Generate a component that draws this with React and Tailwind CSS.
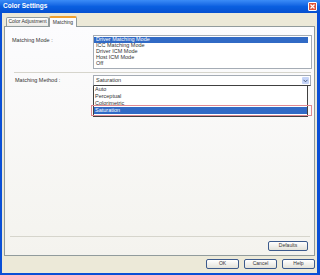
import React from 'react';

const font = { fontFamily: '"Liberation Sans", Arial, sans-serif' };

function XpButton({ label, className = '' }) {
  return (
    <div
      className={`flex h-[10px] items-center justify-center rounded-[2px] border border-[#3c5a8c] bg-gradient-to-b from-[#ffffff] to-[#e3e2da] text-[5px] text-[#333] ${className}`}
    >
      {label}
    </div>
  );
}

function Chevron() {
  return (
    <svg width="5" height="4" viewBox="0 0 5 4">
      <path d="M0.5 0.8 L2.5 2.8 L4.5 0.8" stroke="#4d6185" strokeWidth="1" fill="none" />
    </svg>
  );
}

export default function App() {
  const modes = ['Driver Matching Mode', 'ICC Matching Mode', 'Driver ICM Mode', 'Host ICM Mode', 'Off'];
  const methods = ['Auto', 'Perceptual', 'Colorimetric'];

  return (
    <div className="flex h-[275px] w-[320px] flex-col bg-[#0a4fd6]" style={font}>
      {/* title bar */}
      <div className="flex h-[13px] items-center justify-between bg-gradient-to-b from-[#3b8cf7] via-[#0a5fe0] to-[#0650d0] pl-[3px] pr-[3px]">
        <span className="text-[6.5px] font-bold leading-none text-white">Color Settings</span>
        <div className="flex h-[9px] w-[9px] items-center justify-center rounded-[1px] border border-white bg-[#e0533a]">
          <svg width="5" height="5" viewBox="0 0 5 5">
            <path d="M0.5 0.5 L4.5 4.5 M4.5 0.5 L0.5 4.5" stroke="#fff" strokeWidth="1.2" />
          </svg>
        </div>
      </div>

      {/* body */}
      <div className="ml-[2px] mr-[3px] flex flex-1 flex-col bg-[#ece9d8] px-[2px]">
        {/* tabs */}
        <div className="flex h-[13px] items-end pl-[2px]">
          <div className="flex h-[9px] w-[43px] items-center justify-center rounded-t-[2px] border border-b-0 border-[#919b9c] bg-gradient-to-b from-[#ffffff] to-[#ecebe6] text-[5px] text-[#333]">
            Color Adjustment
          </div>
          <div className="relative -mb-px flex h-[11px] w-[28px] items-center justify-center rounded-t-[2px] border border-b-0 border-t-2 border-[#919b9c] border-t-[#f0a030] bg-[#fcfcfe] text-[5px] text-[#333]">
            Matching
          </div>
        </div>

        {/* panel */}
        <div className="flex h-[230px] flex-col border border-[#919b9c] bg-gradient-to-b from-[#fcfcfe] to-[#f4f3ee] pt-[8px]">
          <div className="flex">
            <div className="w-[88px] pl-[7px] pt-[3px] text-[5.5px] leading-none text-[#333]">Matching Mode :</div>
            <div className="h-[34px] w-[219px] border border-[#a5acb5] bg-white pr-[3px] pt-[1px]">
              {modes.map((m, i) => (
                <div
                  key={m}
                  className={`flex h-[6px] items-center pl-[2px] text-[5.5px] leading-none ${i === 0 ? 'bg-[#316ac5] text-white' : 'text-[#333]'}`}
                >
                  {m}
                </div>
              ))}
            </div>
          </div>

          <div className="ml-[9px] mr-[3px] mt-[3px] border-t border-[#d6d5cc]" />

          <div className="mt-[2px] flex">
            <div className="w-[88px] pl-[10px] pt-[3px] text-[5.5px] leading-none text-[#333]">Matching Method :</div>
            <div className="relative w-[218px]">
              <div className="flex h-[11px] items-center justify-between border border-[#a5acb5] border-b-[#404040] bg-white pl-[2px] pr-[1px] text-[5.5px] text-[#333]">
                <span className="leading-none">Saturation</span>
                <div className="flex h-[7px] w-[7px] items-center justify-center rounded-[1px] bg-[#c6d5f8]">
                  <Chevron />
                </div>
              </div>
              {/* dropdown list */}
              <div className="absolute left-0 top-[11px] w-[215px] border-b border-l border-r border-[#404040] bg-white pb-[2px]">
                {methods.map((m) => (
                  <div key={m} className="flex h-[7px] items-center pl-[1px] text-[5.5px] leading-none text-[#333]">
                    {m}
                  </div>
                ))}
                <div className="flex h-[7px] items-center bg-[#316ac5] pl-[1px] text-[5.5px] leading-none text-white">
                  Saturation
                </div>
              </div>
              {/* highlight frame */}
              <div className="absolute -left-[2px] top-[30px] h-[11px] w-[221px] border border-[#e08a92]" />
            </div>
          </div>

          <div className="flex-1" />

          <div className="ml-[5px] mr-[4px] border-t border-[#d6d5cc]" />
          <div className="flex justify-end pb-[4px] pr-[6px] pt-[4px]">
            <XpButton label="Defaults" className="w-[40px]" />
          </div>
        </div>

        {/* buttons */}
        <div className="flex justify-end gap-[5px] pt-[3px]">
          <XpButton label="OK" className="w-[33px]" />
          <XpButton label="Cancel" className="w-[33px]" />
          <XpButton label="Help" className="w-[33px]" />
        </div>
        <div className="flex-1" />
      </div>
      <div className="h-[2px]" />
    </div>
  );
}
